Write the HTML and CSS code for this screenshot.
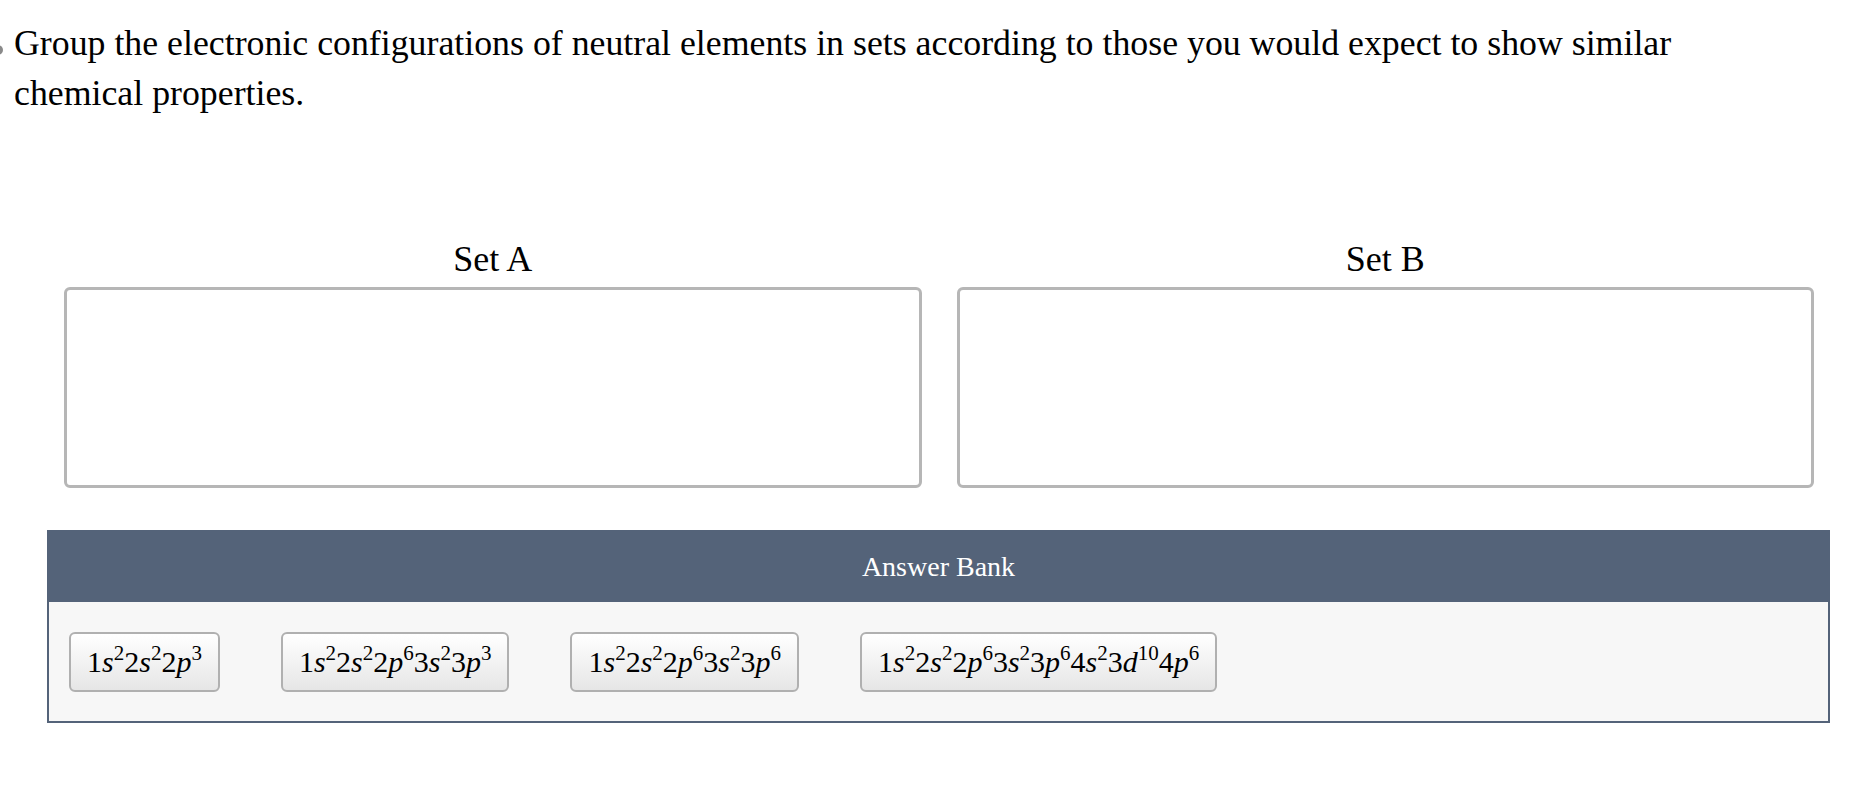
FILE: index.html
```html
<!DOCTYPE html>
<html>
<head>
<meta charset="utf-8">
<link rel="stylesheet" href="styles.css">
</head>
<body>
<div class="page">
  <p class="question"><span class="marker"></span>Group the electronic configurations of neutral elements in sets according to those you would expect to show similar chemical properties.</p>
  <div class="work">
    <div class="sets">
      <div class="set">
        <div class="set-label">Set A</div>
        <div class="drop"></div>
      </div>
      <div class="set">
        <div class="set-label">Set B</div>
        <div class="drop"></div>
      </div>
    </div>
    <div class="bank">
      <div class="bank-head">Answer Bank</div>
      <div class="bank-body">
        <div class="chip">1<i>s</i><sup>2</sup>2<i>s</i><sup>2</sup>2<i>p</i><sup>3</sup></div>
        <div class="chip">1<i>s</i><sup>2</sup>2<i>s</i><sup>2</sup>2<i>p</i><sup>6</sup>3<i>s</i><sup>2</sup>3<i>p</i><sup>3</sup></div>
        <div class="chip">1<i>s</i><sup>2</sup>2<i>s</i><sup>2</sup>2<i>p</i><sup>6</sup>3<i>s</i><sup>2</sup>3<i>p</i><sup>6</sup></div>
        <div class="chip">1<i>s</i><sup>2</sup>2<i>s</i><sup>2</sup>2<i>p</i><sup>6</sup>3<i>s</i><sup>2</sup>3<i>p</i><sup>6</sup>4<i>s</i><sup>2</sup>3<i>d</i><sup>10</sup>4<i>p</i><sup>6</sup></div>
      </div>
    </div>
  </div>
</div>
</body>
</html>
```

FILE: styles.css
```css
html, body {
  margin: 0;
  padding: 0;
  background: #ffffff;
}

body {
  font-family: "Liberation Serif", "Times New Roman", serif;
  color: #000;
}

.page {
  position: relative;
}

.question {
  margin: 18px 0 0 0;
  padding-left: 14px;
  padding-right: 150px;
  font-size: 35.8px;
  line-height: 50px;
  position: relative;
}

.marker {
  position: absolute;
  left: -7px;
  top: 27px;
  width: 10px;
  height: 10px;
  border-radius: 50%;
  background: #8a8a8a;
}

.work {
  margin: 119px 39px 0 47px;
}

.sets {
  display: grid;
  grid-template-columns: 1fr 1fr;
  column-gap: 35px;
  padding: 0 16px 0 17px;
}

.set {
  display: flex;
  flex-direction: column;
}

.set-label {
  text-align: center;
  font-size: 36px;
  line-height: 44px;
  height: 44px;
  margin-bottom: 6px;
}

.drop {
  height: 195px;
  border: 3px solid #b6b6b6;
  border-radius: 6px;
  background: #fff;
}

.bank {
  margin-top: 42px;
  border: 2px solid #546379;
}

.bank-head {
  background: #546379;
  color: #ffffff;
  text-align: center;
  font-size: 28px;
  height: 70px;
  line-height: 70px;
}

.bank-body {
  background: #f7f7f7;
  display: flex;
  align-items: center;
  gap: 61px;
  padding: 30px 20px 29px 20px;
}

.chip {
  height: 56px;
  box-sizing: content-box;
  padding: 0 16px;
  border: 2px solid #b0b0b0;
  border-radius: 6px;
  background: linear-gradient(#ffffff, #e6e6e6);
  font-size: 30px;
  line-height: 56px;
  white-space: nowrap;
}

.chip i {
  font-style: italic;
}

.chip sup {
  font-size: 70%;
  line-height: 0;
  vertical-align: 0.55em;
}
```
